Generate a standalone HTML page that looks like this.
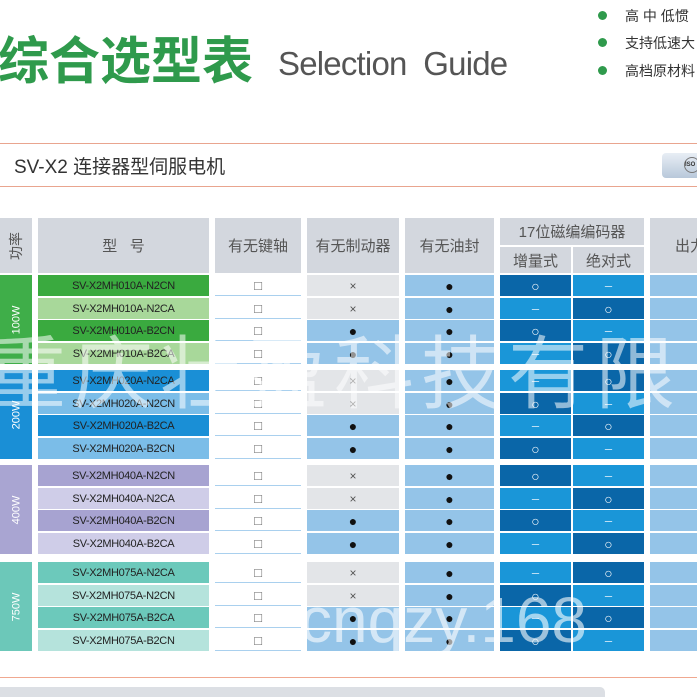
<!DOCTYPE html>
<html><head><meta charset="utf-8"><style>
*{margin:0;padding:0;box-sizing:border-box}
body{width:697px;height:697px;overflow:hidden;background:#fff;position:relative;font-family:"Liberation Sans","Noto Sans CJK SC",sans-serif;color:#444}
.a{position:absolute}
.c{position:absolute;display:flex;align-items:center;justify-content:center;font-size:12px}
.h{background:#d3d7de;color:#555;font-size:15px}
.m{font-size:11px;color:#222;letter-spacing:-0.3px}
.k{background:#fff;border-bottom:1.5px solid #a9d0ee;color:#666;font-size:13px}
.g{background:#e3e5e8;color:#555;font-size:12px}
.b{background:#94c4e8;color:#111;font-size:14px}
.d{background:#0a66a8;color:#fff;font-size:14px}
.l{background:#1a96d8;color:#cfe8f8;font-size:13px}
.p{color:#fff;font-size:11px}
.p span{transform:rotate(-90deg);white-space:nowrap}
</style></head><body>
<div class="a" style="left:-2px;top:20px;font-size:51px;font-weight:bold;color:#2f9a4c;letter-spacing:0px;white-space:nowrap">综合选型表</div>
<div class="a" style="left:278px;top:45px;font-size:33px;color:#555;letter-spacing:-0.8px;white-space:nowrap">Selection&nbsp; Guide</div>
<div class="a" style="left:598px;top:11px;width:9px;height:9px;border-radius:50%;background:#2f9a4c"></div>
<div class="a" style="left:598px;top:38px;width:9px;height:9px;border-radius:50%;background:#2f9a4c"></div>
<div class="a" style="left:598px;top:66px;width:9px;height:9px;border-radius:50%;background:#2f9a4c"></div>
<div class="a" style="left:625px;top:6px;font-size:14px;color:#333;white-space:nowrap">高 中 低惯</div>
<div class="a" style="left:625px;top:33px;font-size:14px;color:#333;white-space:nowrap">支持低速大</div>
<div class="a" style="left:625px;top:61px;font-size:14px;color:#333;white-space:nowrap">高档原材料</div>
<div class="a" style="left:0;top:143px;width:697px;height:1px;background:#e9a58f"></div>
<div class="a" style="left:0;top:186px;width:697px;height:1px;background:#e9a58f"></div>
<div class="a" style="left:14px;top:152px;font-size:19px;color:#333">SV-X2 连接器型伺服电机</div>
<div class="a" style="left:662px;top:153px;width:40px;height:25px;border-radius:4px;background:linear-gradient(#e8eef5,#b8c8da)"></div>
<div class="a" style="left:684px;top:157px;width:16px;height:16px;border-radius:50%;border:1px solid #777;font-size:6px;font-weight:bold;color:#333;line-height:14px">ISO</div>
<div class="c h" style="left:0;top:218px;width:32px;height:55px"><span style="transform:rotate(-90deg);font-size:14px">功率</span></div>
<div class="c h" style="left:38px;top:218px;width:171px;height:55px">型&nbsp;&nbsp;&nbsp;号</div>
<div class="c h" style="left:215px;top:218px;width:86px;height:55px">有无键轴</div>
<div class="c h" style="left:307px;top:218px;width:92px;height:55px">有无制动器</div>
<div class="c h" style="left:405px;top:218px;width:89px;height:55px">有无油封</div>
<div class="c h" style="left:500px;top:218px;width:144px;height:27px">17位磁编编码器</div>
<div class="c h" style="left:500px;top:247px;width:71px;height:26px">增量式</div>
<div class="c h" style="left:573px;top:247px;width:71px;height:26px">绝对式</div>
<div class="c h" style="left:650px;top:218px;width:60px;height:55px;justify-content:flex-start;padding-left:25px">出力</div>
<div id="rows"></div>
<div class="a" style="left:0;top:677px;width:697px;height:1px;background:#f0a890"></div>
<div class="a" style="left:0;top:687px;width:605px;height:10px;background:#dcdfe4;border-radius:0 5px 0 0"></div>
<div class="a" style="left:-14px;top:310px;font-size:80px;color:rgba(255,255,255,.55);letter-spacing:7px;white-space:nowrap">重庆壮盈科技有限</div>
<div class="a" style="left:300px;top:583px;font-size:64px;color:rgba(255,255,255,.6);white-space:nowrap">cnqzy.168</div>
<script>
var G=[[275,'100W','#3fae49','#3aaa3f','#a8d89a'],[370,'200W','#1a8fd6','#1a8fd6','#7bbde8'],[465,'400W','#a9a5d2','#a7a3d1','#cfcde8'],[562,'750W','#6cc8b9','#6cc9bb','#b5e3dc']];
var N=[['SV-X2MH010A-N2CN','SV-X2MH010A-N2CA','SV-X2MH010A-B2CN','SV-X2MH010A-B2CA'],['SV-X2MH020A-N2CA','SV-X2MH020A-N2CN','SV-X2MH020A-B2CA','SV-X2MH020A-B2CN'],['SV-X2MH040A-N2CN','SV-X2MH040A-N2CA','SV-X2MH040A-B2CN','SV-X2MH040A-B2CA'],['SV-X2MH075A-N2CA','SV-X2MH075A-N2CN','SV-X2MH075A-B2CA','SV-X2MH075A-B2CN']];
var E=[[1,0,1,0],[0,1,0,1],[1,0,1,0],[0,1,0,1]];
var h='';
G.forEach(function(g,gi){
h+='<div class="c p" style="left:0;top:'+g[0]+'px;width:32px;height:89px;background:'+g[2]+'"><span>'+g[1]+'</span></div>';
for(var i=0;i<4;i++){var t=Math.round(g[0]+i*22.7),s='top:'+t+'px;height:21px;';
h+='<div class="c m" style="left:38px;width:171px;'+s+'background:'+(i%2?g[4]:g[3])+'">'+N[gi][i]+'</div>';
h+='<div class="c k" style="left:215px;width:86px;'+s+'">□</div>';
h+=i<2?'<div class="c g" style="left:307px;width:92px;'+s+'">×</div>':'<div class="c b" style="left:307px;width:92px;'+s+'">●</div>';
h+='<div class="c b" style="left:405px;width:89px;'+s+'">●</div>';
var e=E[gi][i];
h+=e?'<div class="c d" style="left:500px;width:71px;'+s+'">○</div><div class="c l" style="left:573px;width:71px;'+s+'">–</div>':'<div class="c l" style="left:500px;width:71px;'+s+'">–</div><div class="c d" style="left:573px;width:71px;'+s+'">○</div>';
h+='<div class="c b" style="left:650px;width:60px;'+s+'"></div>';}
});
document.getElementById('rows').outerHTML=h;
</script>
</body></html>
